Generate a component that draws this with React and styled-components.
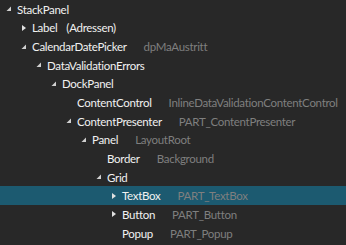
import React from "react";
import styled, { createGlobalStyle } from "styled-components";

const Global = createGlobalStyle`
  html, body { margin: 0; padding: 0; background: #282828; }
  body { width: 346px; height: 245px; overflow: hidden; }
`;

const Tree = styled.div`
  width: 346px;
  height: 245px;
  background: #282828;
  font-family: "Lato", "Noto Sans", sans-serif;
  font-size: 11.5px;
  letter-spacing: -0.3px;
  overflow: hidden;
  display: flex;
  flex-direction: column;
`;

const Row = styled.div`
  height: 18.65px;
  flex: 0 0 18.65px;
  display: flex;
  align-items: center;
  padding-left: ${(p) => 1 + p.$level * 15}px;
  background: ${(p) => (p.$selected ? "#1c5a70" : "transparent")};
  white-space: nowrap;
`;

const Toggle = styled.span`
  width: 16px;
  flex: 0 0 16px;
  display: flex;
  align-items: center;
  justify-content: center;
  height: 100%;
`;

const Name = styled.span`
  color: #f1f1f1;
`;

const Extra = styled.span`
  color: ${(p) => (p.$plain ? "#f1f1f1" : "#7f7f7f")};
  margin-left: ${(p) => (p.$plain ? 9 : 17)}px;
`;

const Expanded = () => (
  <svg width="6" height="6" viewBox="0 0 6 6">
    <polygon points="5,0.5 5,5 0.5,5" fill="#d0d0d0" />
  </svg>
);

const Collapsed = () => (
  <svg width="6" height="8" viewBox="0 0 6 8">
    <polygon points="1,1 5,4 1,7" fill="#e0e0e0" />
  </svg>
);

const rows = [
  { level: 0, name: "StackPanel", state: "open" },
  { level: 1, name: "Label", extra: "(Adressen)", plain: true, state: "closed" },
  { level: 1, name: "CalendarDatePicker", extra: "dpMaAustritt", state: "open" },
  { level: 2, name: "DataValidationErrors", state: "open" },
  { level: 3, name: "DockPanel", state: "open" },
  { level: 4, name: "ContentControl", extra: "InlineDataValidationContentControl" },
  { level: 4, name: "ContentPresenter", extra: "PART_ContentPresenter", state: "open" },
  { level: 5, name: "Panel", extra: "LayoutRoot", state: "open" },
  { level: 6, name: "Border", extra: "Background" },
  { level: 6, name: "Grid", state: "open" },
  { level: 7, name: "TextBox", extra: "PART_TextBox", state: "closed", selected: true },
  { level: 7, name: "Button", extra: "PART_Button", state: "closed" },
  { level: 7, name: "Popup", extra: "PART_Popup" },
];

export default function App() {
  return (
    <>
      <Global />
      <Tree>
        {rows.map((r, i) => (
          <Row key={i} $level={r.level} $selected={r.selected}>
            <Toggle>
              {r.state === "open" ? <Expanded /> : r.state === "closed" ? <Collapsed /> : null}
            </Toggle>
            <Name>{r.name}</Name>
            {r.extra && <Extra $plain={r.plain}>{r.extra}</Extra>}
          </Row>
        ))}
      </Tree>
    </>
  );
}
